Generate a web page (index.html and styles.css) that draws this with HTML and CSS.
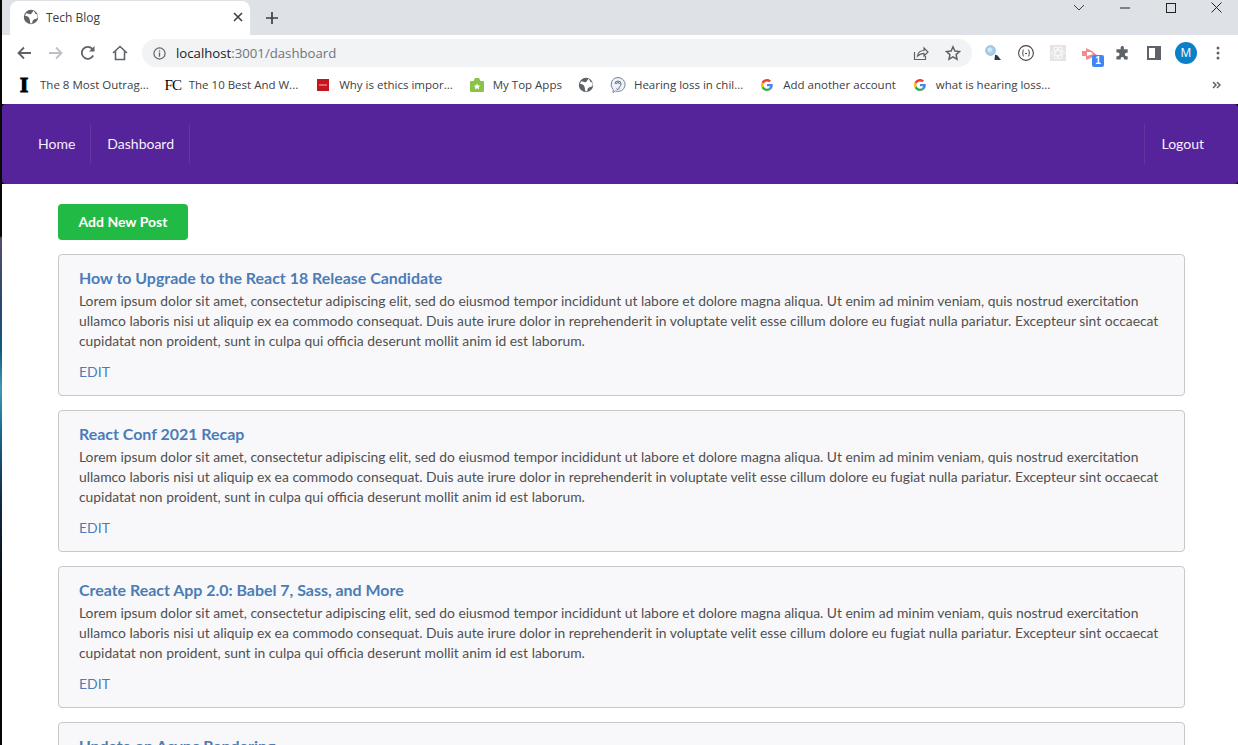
FILE: index.html
```html
<!DOCTYPE html>
<html lang="en">
<head>
<meta charset="utf-8">
<title>Tech Blog</title>
<link rel="stylesheet" href="styles.css">
</head>
<body>
<svg class="defs" width="0" height="0" aria-hidden="true">
  <symbol id="globe" viewBox="0 0 16 16">
    <circle cx="8" cy="8" r="7.200" fill="#5f6368"/>
    <path d="M10.500 1.800C9.300 3.300 9 4.700 7.600 5.200 6.200 5.700 4.800 4.200 3.300 4.300L2 6.600C3.500 7.300 5 7.300 6 8.800 7 10.300 6.900 12.800 7.500 14.600L9.300 14.300C9.200 12.500 9.800 10.800 11.300 10.200 12.700 9.700 13.800 10 14.700 8.500L14.400 5.200C13.200 5.600 12.100 5 11.700 3.300z" fill="#fff"/>
  </symbol>
  <symbol id="google" viewBox="0 0 48 48">
    <path fill="#EA4335" d="M24 9.500c3.500 0 6.700 1.200 9.200 3.600l6.900-6.900C35.900 2.400 30.500 0 24 0 14.600 0 6.500 5.400 2.600 13.200l8 6.200C12.500 13.700 17.800 9.500 24 9.500z"/>
    <path fill="#4285F4" d="M47 24.500c0-1.600-.1-3.100-.4-4.500H24v9h12.900c-.6 3-2.300 5.500-4.800 7.200l7.700 6C44.300 38 47 31.800 47 24.500z"/>
    <path fill="#FBBC05" d="M10.500 28.600c-.5-1.400-.8-3-.8-4.600s.3-3.200.8-4.600l-8-6.200C.9 16.500 0 20.100 0 24s.9 7.500 2.600 10.800z"/>
    <path fill="#34A853" d="M24 48c6.500 0 11.900-2.100 15.900-5.800l-7.700-6c-2.200 1.500-4.900 2.300-8.200 2.300-6.200 0-11.500-4.200-13.400-9.900l-8 6.200C6.500 42.600 14.600 48 24 48z"/>
  </symbol>
</svg>

<div class="chrome">
  <div class="tabstrip">
    <div class="tab">
      <svg class="ic16"><use href="#globe"/></svg>
      <span class="tab-title">Tech Blog</span>
      <svg class="tab-x" viewBox="0 0 10 10"><path d="M1 1l8 8M9 1l-8 8" stroke="#3c4043" stroke-width="1.600"/></svg>
    </div>
    <svg class="newtab" viewBox="0 0 12 12"><path d="M6 0v12M0 6h12" stroke="#3c4043" stroke-width="1.700"/></svg>
    <div class="winctl">
      <svg class="win-down" viewBox="0 0 12 7"><path d="M1 1l5 5 5-5" fill="none" stroke="#3c4043" stroke-width="1"/></svg>
      <svg class="win-min" viewBox="0 0 10 2"><path d="M0 1h10" stroke="#222" stroke-width="1"/></svg>
      <svg class="win-max" viewBox="0 0 10 10"><rect x=".5" y=".5" width="9" height="9" fill="none" stroke="#222"/></svg>
      <svg class="win-close" viewBox="0 0 11 11"><path d="M.5.500l10 10M10.500.500l-10 10" stroke="#222" stroke-width="1"/></svg>
    </div>
  </div>

  <div class="toolbar">
    <svg class="tb-ic" viewBox="0 0 16 16"><path d="M15 8H2.500M8 2.500L2.500 8 8 13.500" fill="none" stroke="#5f6368" stroke-width="1.800"/></svg>
    <svg class="tb-ic" viewBox="0 0 16 16"><path d="M1 8h12.500M8 2.500L13.500 8 8 13.500" fill="none" stroke="#bdc1c6" stroke-width="1.800"/></svg>
    <svg class="tb-ic" viewBox="0 0 16 16"><path d="M13.200 10.500A6 6 0 1 1 12.300 3.800" fill="none" stroke="#5f6368" stroke-width="1.800"/><path d="M14.500 1v5.500H9z" fill="#5f6368"/></svg>
    <svg class="tb-ic" viewBox="0 0 16 16"><path d="M1 8l7-6.500L15 8M3.500 6.500V14.500h9V6.500" fill="none" stroke="#5f6368" stroke-width="1.600"/></svg>
    <div class="omnibox">
      <svg class="info" viewBox="0 0 14 14"><circle cx="7" cy="7" r="6" fill="none" stroke="#5f6368" stroke-width="1.300"/><path d="M7 6v4.500M7 3.500v1.400" stroke="#5f6368" stroke-width="1.400"/></svg>
      <span class="url"><span class="url-host">localhost</span>:3001/dashboard</span>
      <svg class="share" viewBox="0 0 16 16"><path d="M1.500 7v7.500h11V11" fill="none" stroke="#5f6368" stroke-width="1.200"/><path d="M4.500 11c.5-3.500 3-5.500 6.500-5.500V3l4 4-4 4V8.300C8.500 8.300 6.500 9 4.500 11z" fill="none" stroke="#5f6368" stroke-width="1.200"/></svg>
      <svg class="star" viewBox="0 0 16 16"><path d="M8 1.800l1.900 4.200 4.600.5-3.400 3.100.9 4.600L8 11.900l-4 2.300.9-4.600L1.500 6.500l4.600-.5z" fill="none" stroke="#5f6368" stroke-width="1.500"/></svg>
    </div>
    <div class="exts">
      <svg class="ext ext-a" viewBox="0 0 17 16"><path d="M10 9.500l2.500 1 3.500 4.500H9.500z" fill="#2b3a55"/><circle cx="5.500" cy="5.500" r="4.800" fill="#a6d0ec" stroke="#8cb9d9"/><circle cx="4.800" cy="4.800" r="2.200" fill="#d3e9f7"/></svg>
      <svg class="ext ext-b" viewBox="0 0 16 16"><circle cx="8" cy="8" r="7.400" fill="none" stroke="#444" stroke-width="1.100"/><path d="M6 4.800c-1 0-1 .8-1 1.500S5 8 4 8c1 0 1 1 1 1.700s0 1.500 1 1.500M10 4.800c1 0 1 .8 1 1.500S11 8 12 8c-1 0-1 1-1 1.700s0 1.500-1 1.500M7 8.500h2" fill="none" stroke="#444"/></svg>
      <svg class="ext ext-c" viewBox="0 0 16 16"><rect width="16" height="16" fill="#e4e4e4"/><g fill="none" stroke="#f8f8f8" stroke-width="1"><ellipse cx="8" cy="8" rx="6.500" ry="2.600"/><ellipse cx="8" cy="8" rx="6.500" ry="2.600" transform="rotate(60 8 8)"/><ellipse cx="8" cy="8" rx="6.500" ry="2.600" transform="rotate(120 8 8)"/></g></svg>
      <div class="ext-d">
        <svg class="ext-d-ic" viewBox="0 0 16 12"><path d="M0 3h4V0l6 3 6 5-5 1-7 3V8H0z" fill="#f28b8b"/><path d="M5 4h4l2 2-6 2z" fill="#fff"/></svg>
        <span class="badge">1</span>
      </div>
      <svg class="ext ext-e" viewBox="0 0 16 16"><path d="M6 1.500a1.800 1.800 0 0 1 3.500 0V3.500h4v3.800h-1.500a1.900 1.900 0 0 0 0 3.700h1.500v3.500h-3.800v-1.300a1.900 1.900 0 0 0-3.700 0V14.500H1.500v-3.700H3a1.900 1.900 0 0 0 0-3.800H1.500V3.500H6z" fill="#5f6368"/></svg>
      <svg class="ext ext-f" viewBox="0 0 14 14"><path d="M1 1h12v12H1z" fill="none" stroke="#5f6368" stroke-width="2"/><path d="M8 1h5v12H8z" fill="#5f6368"/></svg>
      <span class="avatar">M</span>
      <svg class="ext-g" viewBox="0 0 4 14"><circle cx="2" cy="2" r="1.500" fill="#5f6368"/><circle cx="2" cy="7" r="1.500" fill="#5f6368"/><circle cx="2" cy="12" r="1.500" fill="#5f6368"/></svg>
    </div>
  </div>

  <div class="bookmarks">
    <div class="bm"><span class="bm-icon bm-i">I</span><span>The 8 Most Outrag...</span></div>
    <div class="bm"><span class="bm-icon bm-fc">FC</span><span>The 10 Best And W...</span></div>
    <div class="bm bm-shift"><span class="bm-icon"><svg class="ic12" viewBox="0 0 12 12"><rect width="12" height="12" fill="#c4161c"/><rect x="2" y="5.500" width="8" height="1" fill="#f3b6b8"/></svg></span><span>Why is ethics impor...</span></div>
    <div class="bm"><span class="bm-icon"><svg class="ic16" viewBox="0 0 16 16"><path d="M1 5a1 1 0 0 1 1-1h2.500L6 1h4l1.500 3H14a1 1 0 0 1 1 1v9a1 1 0 0 1-1 1H2a1 1 0 0 1-1-1z" fill="#8bc34a"/><path d="M8 6.500l1 2 2.200.2-1.600 1.500.5 2.200L8 11.300l-2.100 1.100.5-2.200-1.600-1.500L7 8.500z" fill="#fff"/></svg></span><span>My Top Apps</span></div>
    <div class="bm"><span class="bm-icon"><svg class="ic16"><use href="#globe"/></svg></span></div>
    <div class="bm"><span class="bm-icon"><svg class="ic16" viewBox="0 0 16 16"><path d="M8 .5a7 7 0 1 1-2.500 13.500L3 15.500l.2-3A7 7 0 0 1 8 .5z" fill="#eef1f6" stroke="#77859b"/><path d="M5 7a3 3 0 0 1 6 0c0 2-2 2.500-2 4.500a1.300 1.300 0 0 1-2.500 0M6.500 7a1.500 1.500 0 0 1 3 0" fill="none" stroke="#5f6e85"/></svg></span><span>Hearing loss in chil...</span></div>
    <div class="bm"><span class="bm-icon"><svg class="ic12"><use href="#google"/></svg></span><span>Add another account</span></div>
    <div class="bm"><span class="bm-icon"><svg class="ic12"><use href="#google"/></svg></span><span>what is hearing loss...</span></div>
    <svg class="bm-more" viewBox="0 0 9 8"><path d="M1 1l3 3-3 3M5 1l3 3-3 3" fill="none" stroke="#5f6368" stroke-width="1.500"/></svg>
  </div>
</div>

<nav class="navbar">
  <a class="nav-item">Home</a>
  <a class="nav-item">Dashboard</a>
  <a class="nav-item nav-logout">Logout</a>
</nav>

<main class="content">
  <button class="add-btn">Add New Post</button>

  <article class="post">
    <h2 class="post-title">How to Upgrade to the React 18 Release Candidate</h2>
    <p class="post-body">Lorem ipsum dolor sit amet, consectetur adipiscing elit, sed do eiusmod tempor incididunt ut labore et dolore magna aliqua. Ut enim ad minim veniam, quis nostrud exercitation ullamco laboris nisi ut aliquip ex ea commodo consequat. Duis aute irure dolor in reprehenderit in voluptate velit esse cillum dolore eu fugiat nulla pariatur. Excepteur sint occaecat cupidatat non proident, sunt in culpa qui officia deserunt mollit anim id est laborum.</p>
    <a class="post-edit">EDIT</a>
  </article>

  <article class="post">
    <h2 class="post-title">React Conf 2021 Recap</h2>
    <p class="post-body">Lorem ipsum dolor sit amet, consectetur adipiscing elit, sed do eiusmod tempor incididunt ut labore et dolore magna aliqua. Ut enim ad minim veniam, quis nostrud exercitation ullamco laboris nisi ut aliquip ex ea commodo consequat. Duis aute irure dolor in reprehenderit in voluptate velit esse cillum dolore eu fugiat nulla pariatur. Excepteur sint occaecat cupidatat non proident, sunt in culpa qui officia deserunt mollit anim id est laborum.</p>
    <a class="post-edit">EDIT</a>
  </article>

  <article class="post">
    <h2 class="post-title">Create React App 2.0: Babel 7, Sass, and More</h2>
    <p class="post-body">Lorem ipsum dolor sit amet, consectetur adipiscing elit, sed do eiusmod tempor incididunt ut labore et dolore magna aliqua. Ut enim ad minim veniam, quis nostrud exercitation ullamco laboris nisi ut aliquip ex ea commodo consequat. Duis aute irure dolor in reprehenderit in voluptate velit esse cillum dolore eu fugiat nulla pariatur. Excepteur sint occaecat cupidatat non proident, sunt in culpa qui officia deserunt mollit anim id est laborum.</p>
    <a class="post-edit">EDIT</a>
  </article>

  <article class="post">
    <h2 class="post-title">Update on Async Rendering</h2>
  </article>
</main>
</body>
</html>
```

FILE: styles.css
```css
* { box-sizing: border-box; }
html, body { margin: 0; height: 100%; overflow: hidden; }
body {
  background: linear-gradient(#080808 0, #080808 236px, #55506a 238px, #2c4670 300px, #125a80 350px, #3d9ab8 388px, #1d6a90 430px, #102a48 500px, #060606 600px, #060606 100%);
  font-family: "Lato", sans-serif;
  color: #3b3b3b;
  height: 745px;
}
.defs { position: absolute; }
.ic16 { width: 16px; height: 16px; display: block; flex: none; }
.ic12 { width: 12px; height: 12px; display: block; flex: none; }

.chrome { margin-left: 2px; background: #fff; font-family: "Open Sans", sans-serif; color: #3c4043; }

.tabstrip { height: 35px; background: #dee1e6; display: flex; align-items: flex-end; padding-left: 8px; }
.tab { width: 240px; height: 34px; background: #fff; border-radius: 8px 8px 0 0; display: flex; align-items: center; padding: 0 6px 2px 13px; gap: 7px; }
.tab-title { font-size: 12px; flex: 1; }
.tab-x { width: 10px; height: 10px; margin-right: 1px; }
.newtab { width: 12px; height: 12px; margin: 0 0 11px 16px; }
.winctl { margin-left: auto; align-self: flex-start; display: flex; align-items: center; height: 13px; margin-top: 1px; padding-right: 16px; }
.win-down { width: 12px; height: 7px; margin-right: 35px; }
.win-min { width: 10px; height: 2px; margin-right: 36px; }
.win-max { width: 10px; height: 10px; margin-right: 35px; }
.win-close { width: 11px; height: 11px; }

.toolbar { height: 36px; display: flex; align-items: center; padding: 0 0 0 14px; background: #fff; }
.tb-ic { width: 16px; height: 16px; margin-right: 16px; flex: none; }
.tb-ic:nth-of-type(4) { margin-right: 14px; }
.omnibox { width: 830px; height: 28px; border-radius: 14px; background: #f1f3f4; display: flex; align-items: center; padding: 0 11px; flex: none; }
.info { width: 13px; height: 13px; flex: none; }
.url { font-size: 13.200px; margin-left: 10px; padding-bottom: 1px; color: #70757a; flex: 1; }
.url-host { color: #202124; }
.share { width: 16px; height: 16px; margin-right: 16px; }
.star { width: 16px; height: 16px; }
.exts { display: flex; align-items: center; margin-left: 13px; }
.ext { width: 16px; height: 16px; flex: none; }
.ext-a { width: 17px; margin-right: 16px; }
.ext-b { margin-right: 16px; }
.ext-c { margin-right: 16px; }
.ext-d { position: relative; width: 22px; height: 19px; margin: 9px 11px 0 0; flex: none; }
.ext-d-ic { position: absolute; left: 0; top: 0; width: 16px; height: 12px; }
.badge { position: absolute; left: 10px; top: 7px; width: 12px; height: 12px; border-radius: 2px; background: #4285f4; color: #fff; font: 700 10px/12px "Liberation Sans", sans-serif; text-align: center; }
.ext-e { width: 15px; height: 15px; margin-right: 17px; }
.ext-f { width: 14px; height: 14px; margin-right: 14px; }
.avatar { width: 22px; height: 22px; border-radius: 50%; background: #0b80c9; color: #fff; font-size: 12px; line-height: 22px; text-align: center; flex: none; }
.ext-g { width: 4px; height: 14px; margin-left: 19px; }

.bookmarks { height: 33px; display: flex; align-items: center; padding: 0 0 6px 14px; gap: 16px; font-size: 11.500px; color: #3c4043; position: relative; }
.bm { display: flex; align-items: center; gap: 8px; white-space: nowrap; }
.bm-shift { margin-left: 1px; }
.bm-icon { width: 16px; height: 16px; display: flex; align-items: center; justify-content: center; flex: none; }
.bm-i { font: 700 21px/16px "Liberation Serif", serif; color: #000; -webkit-text-stroke: 1.200px #000; }
.bm-fc { font: 400 15px/16px "Liberation Serif", serif; color: #000; letter-spacing: -1px; }
.bm-more { position: absolute; right: 17px; top: 10px; width: 9px; height: 8px; }

.navbar { margin-left: 2px; height: 80px; background: #55249a; border-radius: 4px; display: flex; align-items: center; padding: 0 19px 0 20px; color: #f6f0fc; }
.nav-item { font-size: 14px; height: 40px; line-height: 40px; padding: 0 15px 0 16px; border-right: 1px solid #63369f; }
.nav-logout { margin-left: auto; border-right: 0; border-left: 1px solid #63369f; }

.content { margin-left: 2px; background: #fff; height: 561px; padding: 20px 53px 0 56px; overflow: hidden; }
.add-btn { display: block; width: 130px; height: 36px; border: 0; border-radius: 4px; background: #21ba45; color: #fff; font: 700 14px "Lato", sans-serif; padding: 0 0 2px; }
.post { margin-top: 14px; height: 142px; border: 1px solid #c8c8ca; border-radius: 4px; background: #f8f8fa; padding: 13px 20px 0; }
.post-title { margin: 0; font-size: 15.950px; line-height: 20px; font-weight: 700; color: #4b7cb6; }
.post-body { margin: 3px 0 0; font-size: 13.870px; line-height: 20px; color: #505050; }
.post-edit { display: block; margin-top: 11px; font-size: 14px; line-height: 20px; color: #4b7cb6; }
```
